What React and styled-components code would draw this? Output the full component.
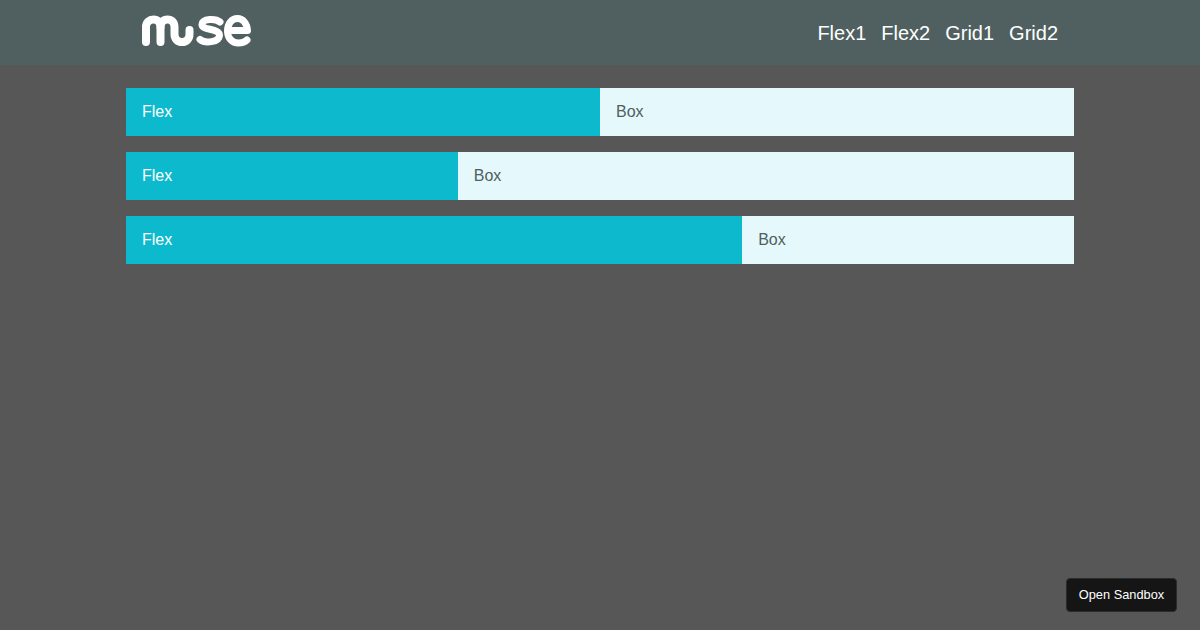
import React from 'react';
import styled, { createGlobalStyle } from 'styled-components';

const GlobalStyle = createGlobalStyle`
  html, body {
    margin: 0;
    padding: 0;
    background: #575757;
    font-family: Helvetica, Arial, "Liberation Sans", sans-serif;
  }
`;

const Page = styled.div`
  min-height: 630px;
  background: #575757;
`;

const Header = styled.header`
  height: 65px;
  background: #505f5f;
`;

const HeaderInner = styled.div`
  width: 948px;
  height: 100%;
  margin: 0 auto;
  padding: 0 16px;
  box-sizing: border-box;
  display: flex;
  align-items: center;
  justify-content: space-between;
`;

const LogoMark = styled.svg`
  display: block;
  width: 110px;
  height: 34px;
  margin-top: -4px;
`;

const Nav = styled.nav`
  display: flex;
  gap: 15px;
  margin-top: 1px;
`;

const NavLink = styled.a`
  color: #ffffff;
  font-size: 20px;
  line-height: 24px;
  text-decoration: none;
`;

const Main = styled.main`
  width: 948px;
  margin: 0 auto;
  padding-top: 23px;
  display: flex;
  flex-direction: column;
  gap: 16px;
`;

const Row = styled.div`
  display: flex;
  height: 48px;
`;

const Cell = styled.div`
  box-sizing: border-box;
  width: ${({ $width }) => $width}%;
  padding: 0 16px;
  display: flex;
  align-items: center;
  font-size: 16px;
`;

const FlexCell = styled(Cell)`
  background: #0dbacd;
  color: #ffffff;
`;

const BoxCell = styled(Cell)`
  background: #e5f8fc;
  color: #505f5f;
`;

const SandboxButton = styled.a`
  position: fixed;
  right: 23px;
  bottom: 18px;
  width: 111px;
  height: 34px;
  padding-bottom: 1px;
  box-sizing: border-box;
  display: flex;
  align-items: center;
  justify-content: center;
  background: #151515;
  border: 1px solid #2b2b2b;
  border-radius: 4px;
  color: #ffffff;
  font-size: 12.8px;
  text-decoration: none;
`;

const rows = [
  [50, 50],
  [35, 65],
  [65, 35],
];

function Logo() {
  return (
    <LogoMark viewBox="0 0 110 34" aria-label="muse">
      <g fill="none" stroke="#ffffff" strokeLinecap="round" strokeLinejoin="round">
        <g strokeWidth="8">
          <path d="M4 28V13C4 8 7.500 5.500 11.500 5.500S18.500 8 18.500 13V28" />
          <path d="M18.500 13C18.500 8 21.500 5.500 25.500 5.500S32.500 8 32.500 13V20C32.500 25 35.500 28 40 28S47.500 25 47.500 20V16" />
        </g>
        <g strokeWidth="7">
          <path d="M78 8C74 4.500 60.500 4 60 10.500C59.500 16.500 78 14 77.500 21.500C77 28.500 63 29.500 58 25.500" />
          <path d="M86 16.500H105.500C105 9.500 101 4.500 95.500 4.500C89.500 4.500 85.500 10 85.500 17C85.500 24 90 29 96.500 29C100.500 29 103 28 105 26" />
        </g>
      </g>
    </LogoMark>
  );
}

export default function App() {
  return (
    <Page>
      <GlobalStyle />
      <Header>
        <HeaderInner>
          <Logo />
          <Nav>
            {['Flex1', 'Flex2', 'Grid1', 'Grid2'].map((item) => (
              <NavLink key={item} href="#">{item}</NavLink>
            ))}
          </Nav>
        </HeaderInner>
      </Header>
      <Main>
        {rows.map(([flex, box], index) => (
          <Row key={index}>
            <FlexCell $width={flex}>Flex</FlexCell>
            <BoxCell $width={box}>Box</BoxCell>
          </Row>
        ))}
      </Main>
      <SandboxButton href="#">Open Sandbox</SandboxButton>
    </Page>
  );
}
